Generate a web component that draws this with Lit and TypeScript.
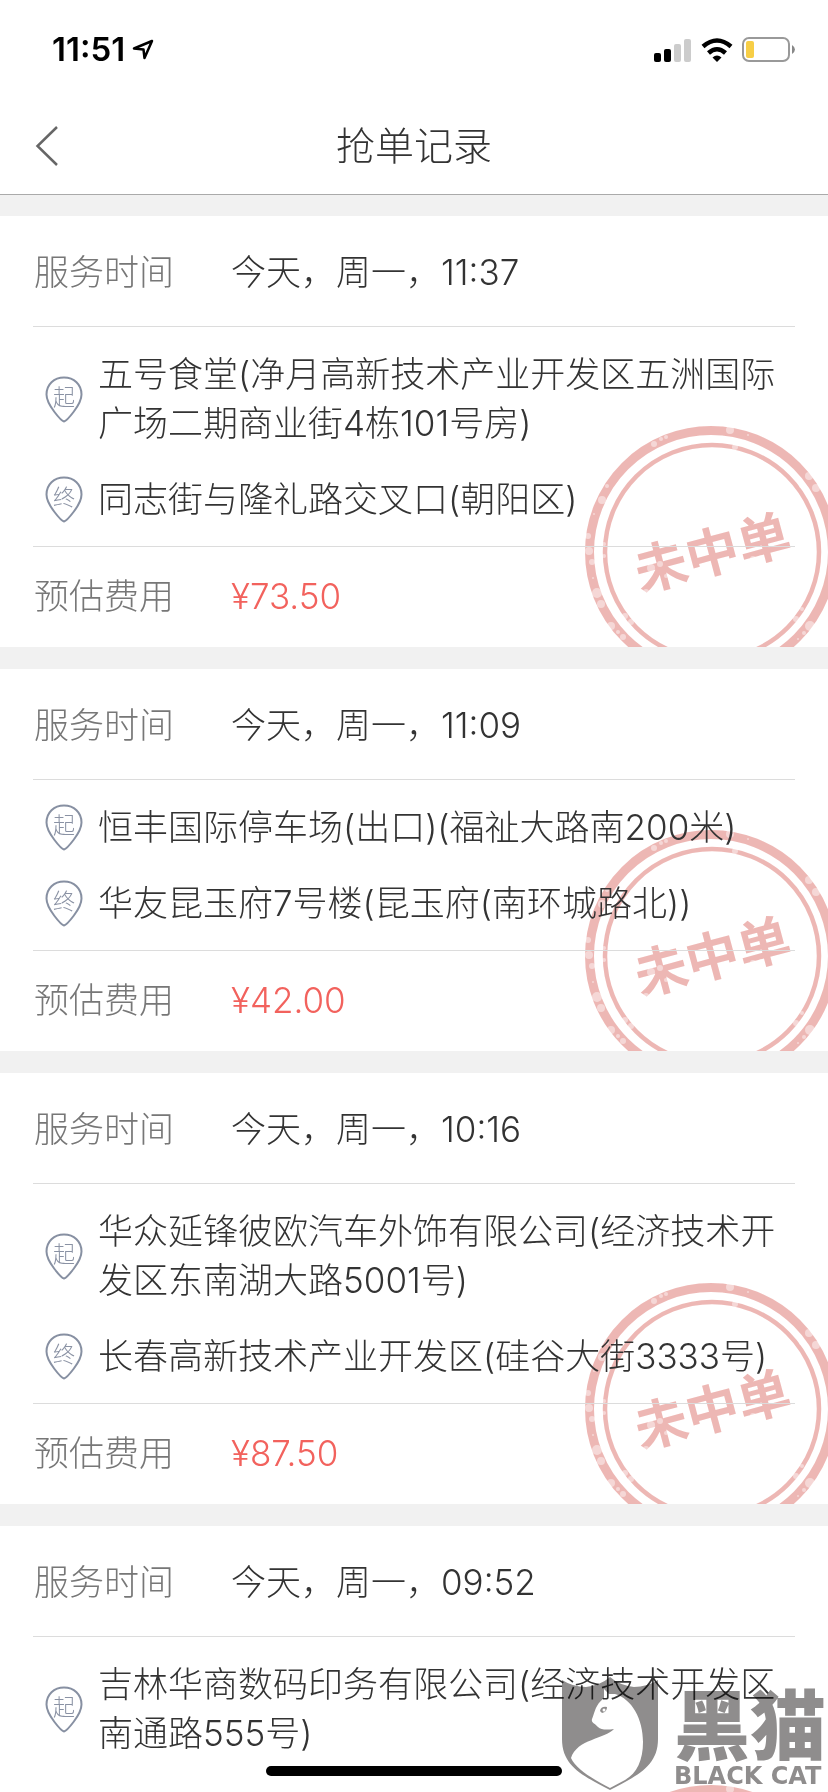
import { LitElement, html, css, svg } from "lit";
import { customElement, property } from "lit/decorators.js";

interface Order {
  time: string;
  from: string;
  to: string;
  price: string;
}

const ORDERS: Order[] = [
  { time: "今天，周一，11:37", from: "五号食堂(净月高新技术产业开发区五洲国际广场二期商业街4栋101号房)", to: "同志街与隆礼路交叉口(朝阳区)", price: "¥73.50" },
  { time: "今天，周一，11:09", from: "恒丰国际停车场(出口)(福祉大路南200米)", to: "华友昆玉府7号楼(昆玉府(南环城路北))", price: "¥42.00" },
  { time: "今天，周一，10:16", from: "华众延锋彼欧汽车外饰有限公司(经济技术开发区东南湖大路5001号)", to: "长春高新技术产业开发区(硅谷大街3333号)", price: "¥87.50" },
  { time: "今天，周一，09:52", from: "吉林华商数码印务有限公司(经济技术开发区南通路555号)", to: "", price: "" },
];

// Worn spots in the stamp ink: x, y, radius
const SPOTS = [
  [145, 4, 4], [69, 18, 3], [76, 13, 2], [81, 11, 2], [163, 9, 1], [17, 74, 4], [22, 60, 2],
  [9, 88, 1], [4, 125, 4], [7, 136, 3], [3, 110, 3], [19, 118, 2], [19, 130, 2], [8, 152, 1],
  [12, 167, 5], [16, 178, 4], [26, 200, 4], [33, 206, 2], [38, 211, 3], [46, 196, 3],
  [40, 190, 3], [150, 21, 3], [224, 50, 4], [231, 62, 4], [216, 60, 2], [225, 200, 5], [219, 207, 2],
  [211, 193, 3], [217, 183, 2], [66, 142, 4], [75, 138, 3], [60, 150, 2], [81, 150, 2], [168, 133, 3],
  [176, 131, 2], [61, 166, 3], [213, 213, 1],
];

@customElement("order-stamp")
export class OrderStamp extends LitElement {
  static styles = css`
    :host { display: block; opacity: 0.5; }
    svg { display: block; width: 252px; height: 252px; }
    .word { font: 700 53px "Noto Sans CJK SC", sans-serif; fill: #dd726c; }
  `;
  render() {
    return html`<svg viewBox="0 0 252 252" role="img" aria-label="未中单">
      <circle cx="126" cy="126" r="121.500" fill="none" stroke="#dd726c" stroke-width="9"></circle>
      <circle cx="127" cy="126" r="107" fill="none" stroke="#dd726c" stroke-width="4.500"></circle>
      <g transform="rotate(-15 127 126)">
        <text class="word" x="127" y="146" text-anchor="middle">未中单</text>
      </g>
      ${SPOTS.map(([x, y, r]) => svg`<circle cx=${x} cy=${y} r=${r} fill="#fff" opacity="0.45"></circle>`)}
    </svg>`;
  }
}

@customElement("map-pin")
export class MapPin extends LitElement {
  @property() label = "";
  static styles = css`
    :host { display: block; flex: none; }
    svg { display: block; width: 38px; height: 47px; }
    text { font: 300 22px "Noto Sans CJK SC", sans-serif; fill: #8a92a4; }
  `;
  render() {
    return html`<svg viewBox="0 0 38 47">
      <path d="M19 45.500C16.500 45 1.500 29 1.500 18.500C1.500 8.500 9 1.500 19 1.500S36.500 8.500 36.500 18.500C36.500 29 21.500 45 19 45.500Z" fill="none" stroke="#8790a2" stroke-width="2"></path>
      <text x="19" y="29" text-anchor="middle">${this.label}</text>
    </svg>`;
  }
}

@customElement("order-card")
export class OrderCard extends LitElement {
  @property({ attribute: false }) order!: Order;
  static styles = css`
    :host { display: block; position: relative; overflow: hidden; flex: none; background: #fff; }
    .body { position: relative; padding: 0 33px; }
    order-stamp { position: absolute; right: -9px; bottom: -31px; }
    .row { display: flex; align-items: center; padding-left: 1px; box-sizing: border-box; color: #333; }
    .time { height: 110px; padding-top: 3px; }
    .fee { height: 100px; padding-bottom: 2px; }
    .label { flex: none; width: 197px; color: #777; }
    .price { color: #f2625d; }
    .stops {
      display: flex; flex-direction: column; gap: 27px;
      margin: 0; padding: 23px 0 22px 12px; list-style: none;
      border: solid #dcdcdc; border-width: 1px 0;
    }
    .stop { display: flex; align-items: center; gap: 15px; color: #333; line-height: 49px; }
    .blank { min-height: 98px; }
  `;
  render() {
    const o = this.order;
    return html`
      <order-stamp></order-stamp>
      <div class="body">
        <div class="row time"><span class="label">服务时间</span><time>${o.time}</time></div>
        <ul class="stops">
          <li class="stop"><map-pin label="起"></map-pin><span>${o.from}</span></li>
          <li class="stop ${o.to ? "" : "blank"}"><map-pin label="终"></map-pin><span>${o.to}</span></li>
        </ul>
        <div class="row fee"><span class="label">预估费用</span><span class="price">${o.price}</span></div>
      </div>`;
  }
}

@customElement("black-cat-mark")
export class BlackCatMark extends LitElement {
  static styles = css`
    :host { display: flex; align-items: flex-end; gap: 15px; color: #8f8d8d; mix-blend-mode: multiply; }
    svg { display: block; width: 98px; height: 115px; }
    .words { display: flex; flex-direction: column; padding-bottom: 2px; }
    .cn { font: 900 76px/82px "Noto Sans CJK SC", sans-serif; }
    .en { font: 700 24px/28px "DejaVu Sans", sans-serif; white-space: nowrap; }
  `;
  render() {
    return html`
      <svg viewBox="0 0 98 115" aria-hidden="true">
        <path d="M1 3Q12 10 25 10Q40 8 49 0Q58 8 73 10Q86 10 97 3V62C97 90 75 99 49 113C23 99 1 90 1 62Z" fill="currentColor"></path>
        <path d="M43 12L48 17L54 17C71 22 82 42 82 65C82 83 76 96 64 103L49 111C30 101 15 92 10 81C16 62 44 62 53 52C46 53 40 53 37 50C34 46 30 46 31 42C34 35 34 28 43 21Z" fill="#fff"></path>
        <path d="M39 34Q40 29 46 30Q46 35 41 36Z" fill="currentColor"></path><circle cx="43" cy="33" r="1.500" fill="#fff"></circle>
      </svg>
      <div class="words"><span class="cn">黑猫</span><span class="en">BLACK CAT</span></div>`;
  }
}

@customElement("app-root")
export class AppRoot extends LitElement {
  static styles = css`
    :host {
      display: flex; flex-direction: column; position: relative; height: 100vh; overflow: hidden;
      background: #f1f1f1; color: #333;
      font: 300 35px/49px Inter, "Noto Sans CJK SC", sans-serif;
    }
    .status {
      display: flex; align-items: center; justify-content: space-between; flex: none;
      height: 99px; box-sizing: border-box; padding: 0 32px 0 52px; background: #fff; color: #000;
    }
    .clock { display: flex; align-items: center; gap: 7px; font-size: 33px; font-weight: 600; }
    .signals { display: flex; align-items: center; gap: 9px; }
    svg { display: block; }
    .nav {
      display: grid; grid-template-columns: 1fr auto 1fr; align-items: center; flex: none;
      height: 96px; box-sizing: border-box; padding: 0 33px 2px; background: #fff;
      border-bottom: 1px solid #aaa;
    }
    .back { justify-self: start; padding: 0; border: 0; background: none; cursor: pointer; }
    h1 { margin: 0; font-size: 39px; font-weight: 300; line-height: 56px; }
    .list { display: flex; flex-direction: column; gap: 22px; flex: 1; min-height: 0; padding-top: 21px; overflow: hidden; }
    .home { position: absolute; left: 50%; bottom: 16px; width: 296px; height: 10px; margin-left: -148px; border-radius: 5px; background: #000; }
    .mark { position: absolute; right: 2px; bottom: 0; }
  `;
  render() {
    return html`
      <div class="status">
        <div class="clock"><span>11:51</span>
          <svg width="22" height="22" viewBox="0 0 22 22"><path d="M20 2L2 9.500L11.500 10.500L12.500 19Z" fill="none" stroke="#000" stroke-width="2.500" stroke-linejoin="round"></path></svg>
        </div>
        <div class="signals">
          <svg width="38" height="24" viewBox="0 0 38 24"><rect x="0" y="15" width="7" height="9" rx="2"></rect><rect x="10" y="11" width="7" height="13" rx="2"></rect><rect x="20" y="6" width="7" height="18" rx="2" fill="#ccc"></rect><rect x="30" y="1" width="7" height="23" rx="2" fill="#ccc"></rect></svg>
          <svg width="32" height="24" viewBox="0 0 32 24"><path d="M2 8.500Q16 -3.500 30 8.500M7.500 15Q16 7.500 24.500 15" fill="none" stroke="#000" stroke-width="4.500"></path><path d="M11.500 19.500Q16 15.500 20.500 19.500L16 24Z"></path></svg>
          <svg width="54" height="26" viewBox="0 0 54 26"><rect x="1" y="1" width="46" height="23" rx="6" fill="none" stroke="#999" stroke-width="2"></rect><rect x="4" y="4" width="8" height="17" rx="2" fill="#f7ce46"></rect><path d="M50 8Q53 10 53 12.500T50 17Z" fill="#888"></path></svg>
        </div>
      </div>
      <header class="nav">
        <button class="back" aria-label="返回"><svg width="26" height="40" viewBox="0 0 26 40"><path d="M24 1L4.500 20L24 39" fill="none" stroke="#666" stroke-width="2.500"></path></svg></button>
        <h1>抢单记录</h1>
      </header>
      <main class="list">${ORDERS.map((o) => html`<order-card .order=${o}></order-card>`)}</main>
      <black-cat-mark class="mark"></black-cat-mark>
      <div class="home"></div>`;
  }
}
